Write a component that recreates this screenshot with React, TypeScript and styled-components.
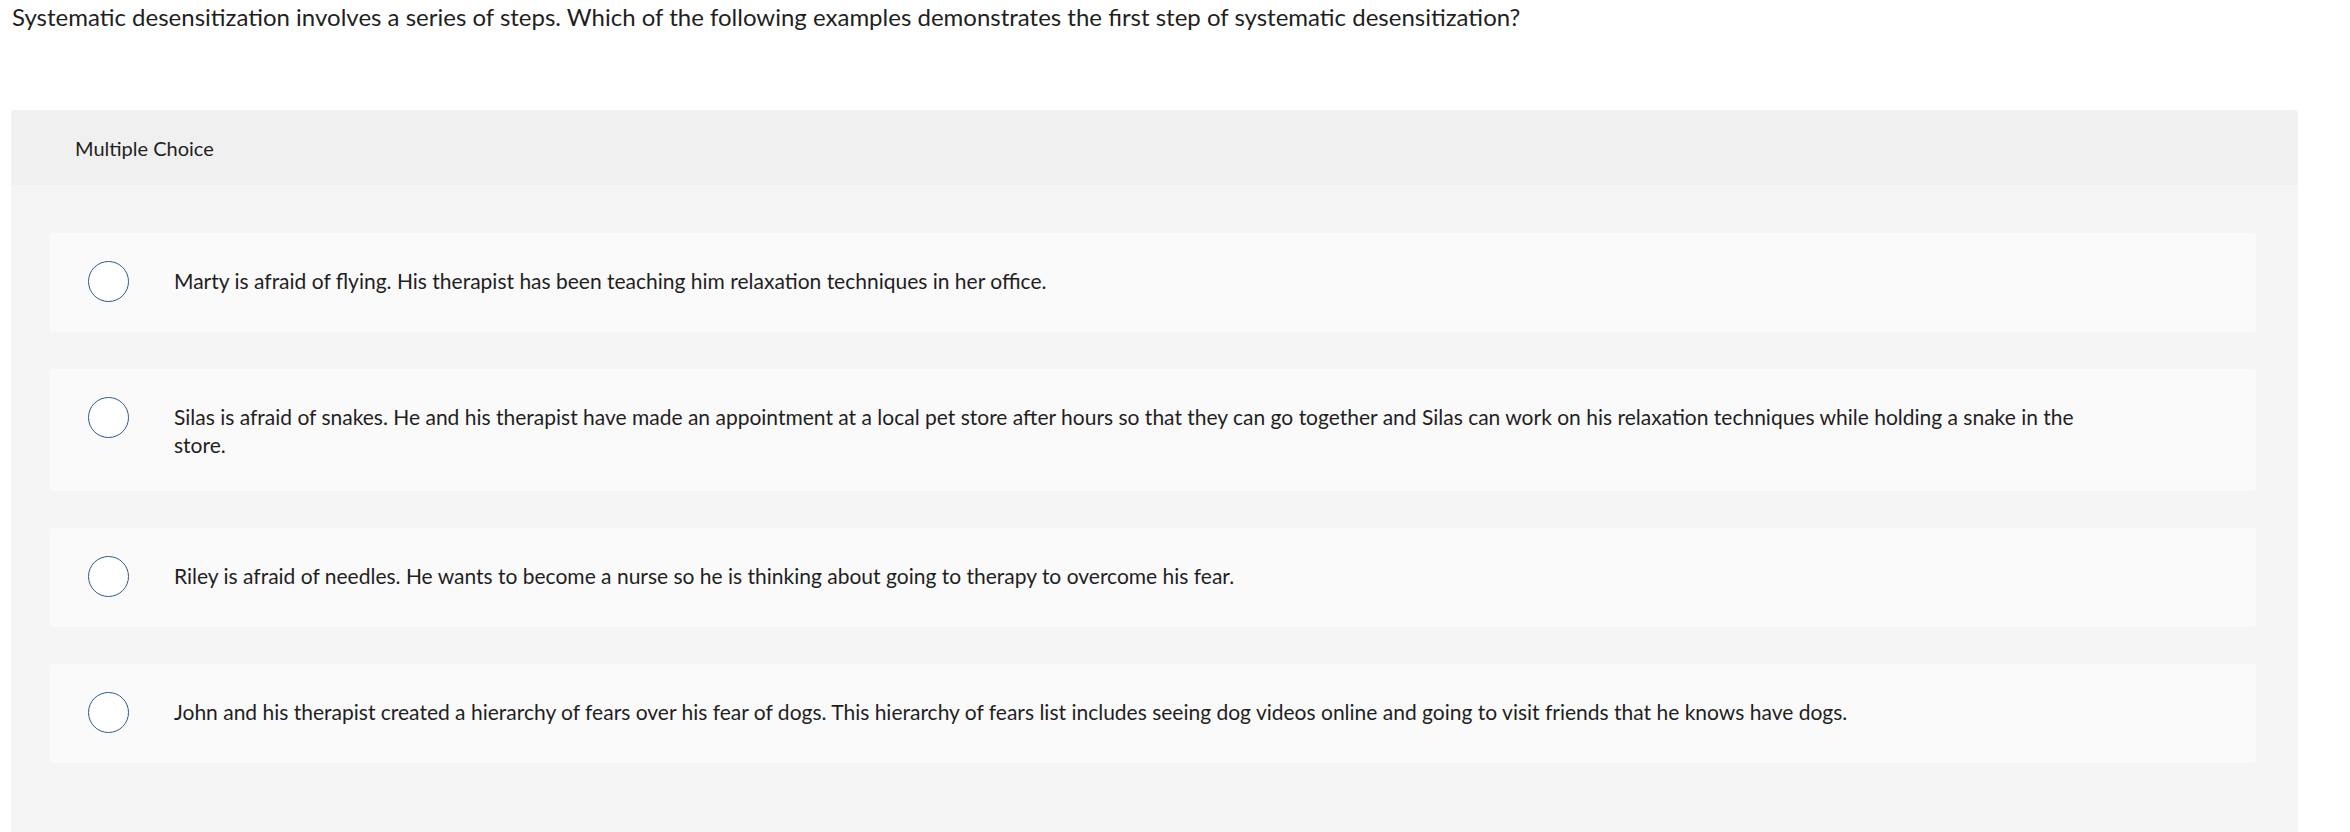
import React from 'react';
import styled, { createGlobalStyle } from 'styled-components';

const GlobalStyle = createGlobalStyle`
	html, body {
		margin: 0;
		padding: 0;
		background: #ffffff;
	}
	body {
		font-family: Lato, 'Open Sans', sans-serif;
		color: #1f1f1f;
	}
`;

const choices: string[] = [
	'Marty is afraid of flying. His therapist has been teaching him relaxation techniques in her office.',
	'Silas is afraid of snakes. He and his therapist have made an appointment at a local pet store after hours so that they can go together and Silas can work on his relaxation techniques while holding a snake in the store.',
	'Riley is afraid of needles. He wants to become a nurse so he is thinking about going to therapy to overcome his fear.',
	'John and his therapist created a hierarchy of fears over his fear of dogs. This hierarchy of fears list includes seeing dog videos online and going to visit friends that he knows have dogs.',
];

const App = () => (
	<>
		<GlobalStyle />
		<Page>
			<Prompt>
				Systematic desensitization involves a series of steps. Which of the following examples demonstrates
				the first step of systematic desensitization?
			</Prompt>
			<Panel>
				<PanelHeader>Multiple Choice</PanelHeader>
				<ChoiceList>
					{choices.map((text, index) => (
						<ChoiceCard key={index}>
							<Radio aria-label={`choice ${index + 1}`} />
							<ChoiceText>{text}</ChoiceText>
						</ChoiceCard>
					))}
				</ChoiceList>
			</Panel>
		</Page>
	</>
);

const Page = styled.div`
	width: 2350px;
	min-height: 832px;
	padding-top: 1px;
	box-sizing: border-box;
`;

const Prompt = styled.p`
	margin: 0 0 0 12px;
	font-size: 24px;
	line-height: 32px;
	color: #1f1f1f;
`;

const Panel = styled.section`
	margin: 77px 0 0 11px;
	width: 2287px;
	border-radius: 4px 4px 0 0;
	background: #f5f5f5;
	overflow: hidden;
`;

const PanelHeader = styled.div`
	height: 75px;
	display: flex;
	align-items: center;
	padding-left: 64px;
	background: #f0f0f0;
	font-size: 20px;
	color: #1f1f1f;
`;

const ChoiceList = styled.div`
	display: flex;
	flex-direction: column;
	gap: 37px;
	padding: 48px 42px 90px 39px;
`;

const ChoiceCard = styled.div`
	display: flex;
	align-items: flex-start;
	gap: 45px;
	padding: 28px 30px 30px 38px;
	border-radius: 4px;
	background: #fafafa;
	min-height: 41px;
`;

const Radio = styled.span`
	flex: 0 0 auto;
	width: 41px;
	height: 41px;
	box-sizing: border-box;
	border-radius: 50%;
	border: 1.5px solid #2d5a8c;
	background: #ffffff;
`;

const ChoiceText = styled.div`
	max-width: 1950px;
	padding: 6px 0 2px;
	font-size: 21px;
	line-height: 28px;
	color: #1f1f1f;
`;

export default App;
